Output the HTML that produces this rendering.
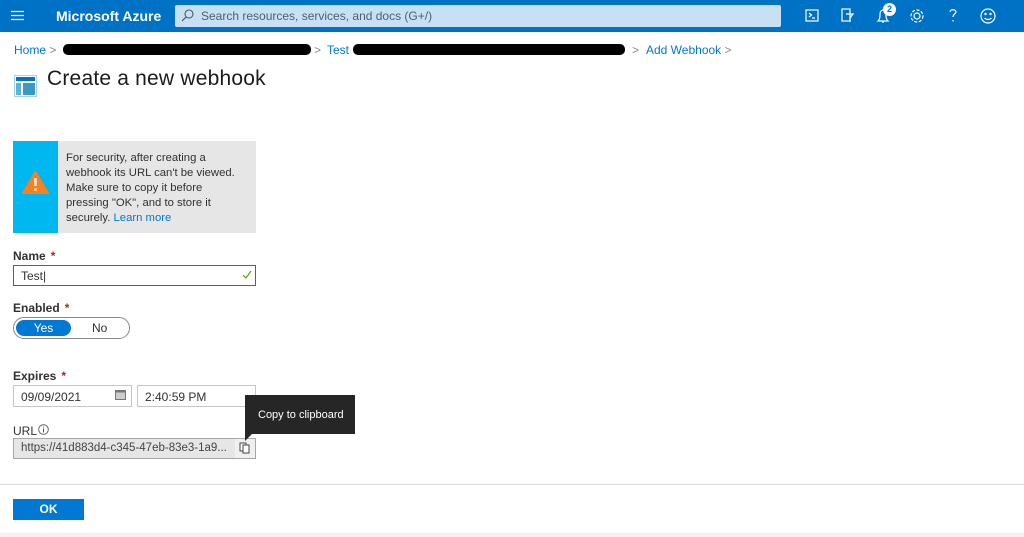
<!DOCTYPE html>
<html><head><meta charset="utf-8"><style>
*{margin:0;padding:0;box-sizing:border-box}
body{width:1024px;height:537px;overflow:hidden;background:#fff;font-family:"Liberation Sans",sans-serif;color:#323130;position:relative;font-size:12px}
.a{position:absolute}
.hdr{left:0;top:0;width:1024px;height:32px;background:#0072c6}
.lbl{font-size:12px;font-weight:bold;color:#323130}
.req{color:#a4262c;margin-left:5px}
.inp{border:1px solid #c8c6c4;height:22px;background:#fff;font-size:12px;padding:4px 7px}
</style></head><body>
<div class="a hdr"></div>
<svg class="a" style="left:11px;top:10px" width="13" height="11"><path d="M0 1.5h13M0 5.5h13M0 9.5h13" stroke="#fff" stroke-width="1.3"/></svg>
<div class="a" style="left:56px;top:8px;color:#fff;font-weight:bold;font-size:14px">Microsoft Azure</div>
<div class="a" style="left:175px;top:5px;width:606px;height:22px;background:#c7e0f4;border-radius:2px"></div>
<svg class="a" style="left:181px;top:9px" width="13" height="13"><circle cx="8" cy="5" r="4" fill="none" stroke="#555" stroke-width="1.1"/><path d="M5 8L1 12" stroke="#555" stroke-width="1.2"/></svg>
<div class="a" style="left:201px;top:9px;color:#4d5f73;font-size:12px">Search resources, services, and docs (G+/)</div>
<svg class="a" style="left:790px;top:0" width="234" height="32" fill="none" stroke="#fff" stroke-width="1.2">
<rect x="16" y="10" width="12" height="11"/><path d="M19 13l2.5 2-2.5 2M22 18h3"/>
<rect x="52" y="9" width="8" height="12"/><path d="M56 14h7l-3 4v4"/>
<path d="M88 21c2-2 2-4 2-7 0-3 2-4 3-4s3 1 3 4c0 3 0 5 2 7z M92 22h2"/>
<circle cx="127" cy="16" r="3"/><circle cx="127" cy="16" r="6" stroke-dasharray="3 1.6"/>
<path d="M160 12c0-3 6-3 6 0 0 2-3 2-3 5M163 20v1.5"/>
<circle cx="198" cy="16" r="7"/><circle cx="195.5" cy="14" r=".6" fill="#fff"/><circle cx="200.5" cy="14" r=".6" fill="#fff"/><path d="M194.5 18c2 2 5 2 7 0"/>
</svg>
<div class="a" style="left:883px;top:3px;width:13px;height:13px;border-radius:50%;background:#fff;color:#0072c6;font-size:9px;font-weight:bold;text-align:center;line-height:13px">2</div>

<div class="a" style="left:14px;top:43px;font-size:12px;color:#0078d4;white-space:nowrap">Home <span style="color:#888">&gt;</span></div>
<div class="a" style="left:63px;top:44px;width:248px;height:11px;background:#000;border-radius:5px"></div>
<div class="a" style="left:314px;top:43px;color:#888">&gt;</div>
<div class="a" style="left:327px;top:43px;color:#0078d4">Test</div>
<div class="a" style="left:353px;top:44px;width:272px;height:11px;background:#000;border-radius:5px"></div>
<div class="a" style="left:632px;top:43px;color:#888">&gt;</div>
<div class="a" style="left:646px;top:43px;color:#0078d4">Add Webhook <span style="color:#888">&gt;</span></div>

<svg class="a" style="left:14px;top:75px" width="23" height="22"><rect x="0.5" y="0.5" width="22" height="21" fill="#fff" stroke="#a3cfe8"/><rect x="2" y="2" width="19" height="4" fill="#0072c6"/><rect x="2" y="8" width="5" height="12" fill="#59b4d9"/><rect x="9" y="8" width="12" height="12" fill="#3999c6"/></svg>
<div class="a" style="left:47px;top:67px;font-size:21px;color:#1b1b1b;letter-spacing:0.2px">Create a new webhook</div>

<div class="a" style="left:13px;top:141px;width:243px;height:92px;background:#e6e6e6"></div>
<div class="a" style="left:13px;top:141px;width:45px;height:92px;background:#00b7f0"></div>
<svg class="a" style="left:22px;top:171px" width="27" height="23"><path d="M13.5 1L26 22H1z" fill="#f7801f" stroke="#f7801f" stroke-linejoin="round" stroke-width="2"/><path d="M13.5 7v8" stroke="#fff" stroke-width="2.4"/><circle cx="13.5" cy="18.5" r="1.3" fill="#fff"/></svg>
<div class="a" style="left:66px;top:151px;width:188px;font-size:11.3px;line-height:15px;color:#323130;white-space:nowrap">For security, after creating a<br>webhook its URL can't be viewed.<br>Make sure to copy it before<br>pressing "OK", and to store it<br>securely. <span style="color:#0078d4">Learn more</span></div>

<div class="a lbl" style="left:13px;top:249px">Name<span class="req">*</span></div>
<div class="a inp" style="left:13px;top:265px;width:243px;height:21px;border-color:#0078d4;padding:3px 7px">Test|</div>
<svg class="a" style="left:242px;top:270px" width="10" height="9"><path d="M1 5l3 3 5-7" fill="none" stroke="#57a300" stroke-width="1.2"/></svg>

<div class="a lbl" style="left:13px;top:301px">Enabled<span class="req">*</span></div>
<div class="a" style="left:13px;top:317px;width:117px;height:22px;border:1px solid #8a8886;border-radius:11px"></div>
<div class="a" style="left:16px;top:320px;width:55px;height:16px;background:#0078d4;border-radius:8px;color:#fff;text-align:center;line-height:16px;font-size:12px">Yes</div>
<div class="a" style="left:92px;top:321px;font-size:12px">No</div>

<div class="a lbl" style="left:13px;top:369px">Expires<span class="req">*</span></div>
<div class="a inp" style="left:13px;top:385px;width:119px">09/09/2021</div>
<svg class="a" style="left:115px;top:390px" width="11" height="10"><rect x="0.5" y="0.5" width="10" height="9" fill="#ccc" stroke="#777"/><rect x="0.5" y="0.5" width="10" height="2" fill="#777"/></svg>
<div class="a inp" style="left:137px;top:385px;width:119px">2:40:59 PM</div>

<div class="a" style="left:13px;top:424px;font-size:12px">URL</div>
<svg class="a" style="left:38px;top:424px" width="11" height="11"><circle cx="5.5" cy="5.5" r="4.8" fill="none" stroke="#555" stroke-width=".9"/><path d="M5.5 4.5v4M5.5 2.5v1" stroke="#555"/></svg>
<div class="a inp" style="left:13px;top:438px;width:243px;height:21px;background:#e6e6e6;border-color:#a6a6a6;color:#444;padding:3px 7px;font-size:11.5px">https://41d883d4-c345-47eb-83e3-1a9...</div>
<div class="a" style="left:235px;top:439px;width:20px;height:19px;background:#f0f0f0"></div>
<svg class="a" style="left:239px;top:442px" width="11" height="12" fill="#fff" stroke="#444" stroke-width="1"><rect x="1" y="1" width="6" height="8"/><rect x="4" y="3" width="6" height="8"/></svg>

<div class="a" style="left:245px;top:395px;width:110px;height:39px;background:#262626"></div>
<svg class="a" style="left:244px;top:433px" width="10" height="8"><path d="M1 0h8L1 8z" fill="#262626"/></svg>
<div class="a" style="left:258px;top:409px;color:#fff;font-size:11px">Copy to clipboard</div>

<div class="a" style="left:0;top:484px;width:1024px;height:1px;background:#dcdcdc"></div>
<div class="a" style="left:13px;top:499px;width:71px;height:21px;background:#0078d4;color:#fff;font-weight:bold;text-align:center;line-height:21px;font-size:12px">OK</div>
<div class="a" style="left:0;top:533px;width:1024px;height:4px;background:#f2f2f2"></div>
</body></html>
